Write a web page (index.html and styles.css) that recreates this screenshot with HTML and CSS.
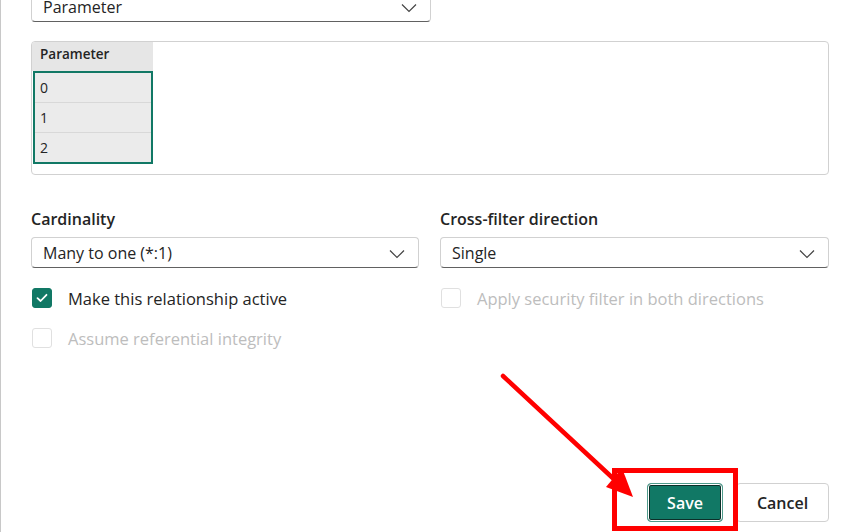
FILE: index.html
```html
<!DOCTYPE html>
<html lang="en">
<head>
    <meta charset="UTF-8">
    <meta name="viewport" content="width=device-width, initial-scale=1.0">
    <title>Edit relationship</title>
    <link rel="stylesheet" href="styles.css">
</head>
<body>
<div class="dialog">

    <div class="select select-top">
        <span>Parameter</span>
        <svg class="chevron" width="16" height="10" viewBox="0 0 16 10"><path d="M1 1.5 L8 8.5 L15 1.5" fill="none" stroke="#444" stroke-width="1.2"/></svg>
    </div>

    <div class="preview">
        <div class="col">
            <div class="col-head">Parameter</div>
            <div class="col-body">
                <div class="cell">0</div>
                <div class="cell">1</div>
                <div class="cell">2</div>
            </div>
        </div>
    </div>

    <div class="options">
        <div class="field">
            <label class="field-label">Cardinality</label>
            <div class="select">
                <span>Many to one (*:1)</span>
                <svg class="chevron" width="16" height="10" viewBox="0 0 16 10"><path d="M1 1.5 L8 8.5 L15 1.5" fill="none" stroke="#444" stroke-width="1.2"/></svg>
            </div>
            <div class="check">
                <span class="box checked">
                    <svg width="12" height="10" viewBox="0 0 12 10"><path d="M1.5 5.2 L4.6 8 L10.5 1.8" fill="none" stroke="#fff" stroke-width="1.8" stroke-linecap="round" stroke-linejoin="round"/></svg>
                </span>
                <span class="check-text">Make this relationship active</span>
            </div>
            <div class="check disabled">
                <span class="box"></span>
                <span class="check-text">Assume referential integrity</span>
            </div>
        </div>
        <div class="field">
            <label class="field-label">Cross-filter direction</label>
            <div class="select">
                <span>Single</span>
                <svg class="chevron" width="16" height="10" viewBox="0 0 16 10"><path d="M1 1.5 L8 8.5 L15 1.5" fill="none" stroke="#444" stroke-width="1.2"/></svg>
            </div>
            <div class="check disabled">
                <span class="box"></span>
                <span class="check-text">Apply security filter in both directions</span>
            </div>
        </div>
    </div>

    <div class="footer">
        <button class="btn btn-primary">Save</button>
        <button class="btn">Cancel</button>
    </div>

    <!-- red annotation over the save button -->
    <svg class="markup" width="856" height="532" viewBox="0 0 856 532">
        <rect x="614.5" y="470.5" width="121" height="58" fill="none" stroke="#f00" stroke-width="5"/>
        <line x1="503" y1="376" x2="617" y2="482" stroke="#f00" stroke-width="4.5" stroke-linecap="round"/>
        <polygon points="633,497 606,487 622,468" fill="#f00"/>
    </svg>
</div>
</body>
</html>
```

FILE: styles.css
```css
* {
    box-sizing: border-box;
}

body {
    margin: 0;
    background: #fff;
    font-family: 'Open Sans', 'Segoe UI', sans-serif;
    color: #242424;
    overflow: hidden;
}

.dialog {
    position: relative;
    height: 532px;
    border-left: 1px solid #c8c8c8;
    padding: 0 27px 0 30px;
    display: flex;
    flex-direction: column;
}

.select {
    display: flex;
    align-items: center;
    justify-content: space-between;
    height: 31px;
    padding: 0 13px 0 11px;
    border: 1px solid #d1d1d1;
    border-bottom-color: #616161;
    border-radius: 4px;
    font-size: 16px;
}

.select-top {
    width: 400px;
    margin-top: -9px;
}

.chevron {
    margin-top: 2px;
}

.preview {
    margin-top: 19px;
    height: 134px;
    border: 1px solid #d1d1d1;
    border-radius: 4px;
}

.col {
    width: 121px;
}

.col-head {
    height: 29px;
    padding: 3px 0 0 8px;
    background: #e6e6e6;
    font-size: 13.5px;
    font-weight: 600;
    border-top-left-radius: 3px;
}

.col-body {
    margin-left: 1px;
    border: 2px solid #117865;
    background: #ebebeb;
}

.cell {
    height: 30px;
    padding: 5px 0 0 5px;
    font-size: 14px;
    border-top: 1px solid #d8d8d8;
}

.cell:first-child {
    border-top: none;
    height: 29px;
}

.options {
    margin-top: 33px;
    display: grid;
    grid-template-columns: 388px 389px;
    gap: 21px;
}

.field-label {
    display: block;
    height: 25px;
    font-size: 16px;
    font-weight: 600;
    margin-bottom: 4px;
}

.check {
    display: flex;
    align-items: center;
    gap: 16px;
    height: 20px;
    margin-top: 20px;
    font-size: 16.5px;
    padding-left: 1px;
}

.check + .check {
    margin-top: 20px;
}

.box {
    flex: none;
    width: 20px;
    height: 20px;
    border: 1px solid #e0e0e0;
    border-radius: 3px;
    display: flex;
    align-items: center;
    justify-content: center;
}

.box.checked {
    background: #117865;
    border-color: #117865;
}

.disabled .check-text {
    color: #bdbdbd;
}

.footer {
    margin-top: auto;
    margin-bottom: 10px;
    display: flex;
    justify-content: flex-end;
    gap: 13px;
}

.btn {
    height: 39px;
    padding: 1px 18px 0;
    border: 1px solid #d1d1d1;
    border-radius: 4px;
    background: #fff;
    font-family: inherit;
    font-size: 16px;
    font-weight: 600;
    color: #242424;
    min-width: 93px;
}

.btn-primary {
    min-width: 76px;
    padding: 1px 12px 0;
    background: #117865;
    border-color: #4f9c8c;
    color: #fff;
    box-shadow: inset 0 0 0 1px #fff, inset 0 0 0 2px #0c2f29;
}

.markup {
    position: absolute;
    left: -1px;
    top: 0;
    pointer-events: none;
}
```
